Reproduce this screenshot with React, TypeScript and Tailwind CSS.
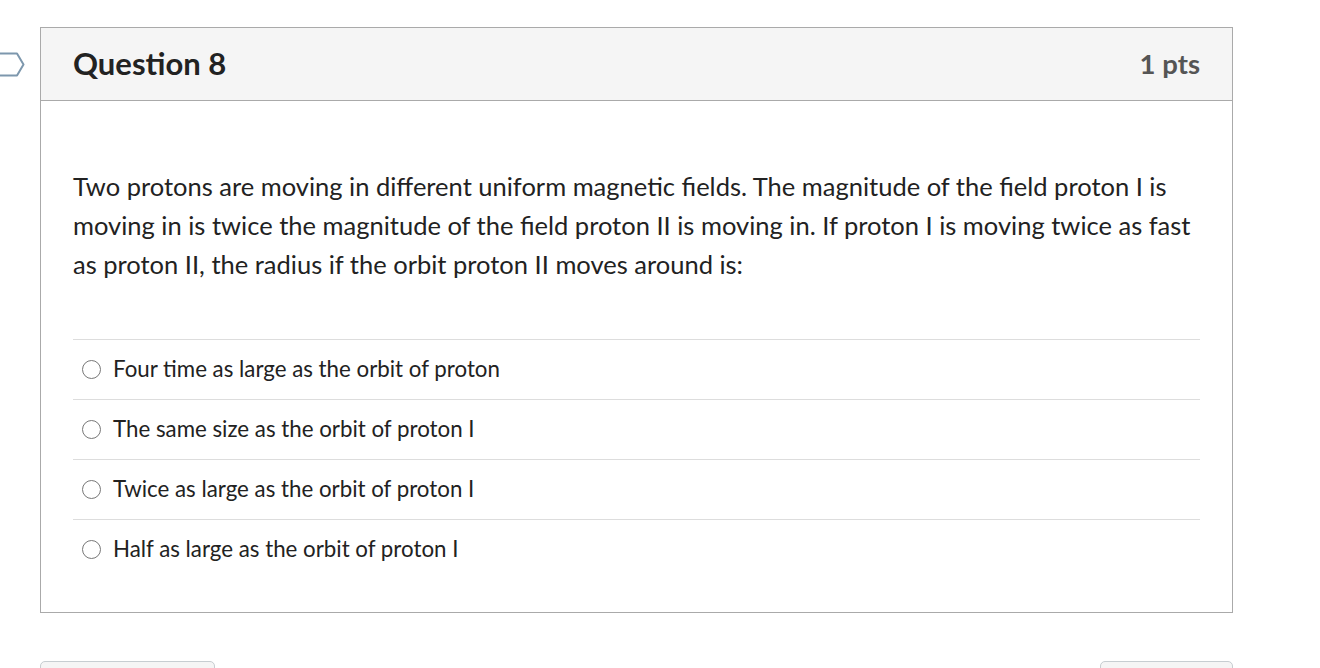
import React from 'react';

const answers = [
  'Four time as large as the orbit of proton',
  'The same size as the orbit of proton I',
  'Twice as large as the orbit of proton I',
  'Half as large as the orbit of proton I',
];

function Radio() {
  return (
    <span className="w-[19px] h-[19px] rounded-full border-[1.5px] border-[#777] bg-white shrink-0" />
  );
}

export default function App() {
  return (
    <div className="w-[1320px] h-[668px] overflow-hidden bg-white text-[#222]" style={{ fontFamily: 'Lato, "Noto Sans", sans-serif' }}>
      <div className="relative pt-[27px] pl-[40px] w-[1233px]">
        {/* flag marker */}
        <svg className="absolute left-0 top-[52px]" width="26" height="26" viewBox="0 0 26 26">
          <path d="M-2 1.5 H17 L23.5 12.5 L17 23.5 H-2" fill="none" stroke="#7d97ad" strokeWidth="2" strokeLinejoin="round" />
        </svg>

        <div className="border border-[#aaa]">
          <div className="h-[73px] bg-[#f5f5f5] border-b border-[#aaa] px-[32px] flex items-center justify-between">
            <span className="text-[31px] font-bold text-[#222] -mt-[2px]">Question 8</span>
            <span className="text-[27.5px] font-bold text-[#555]">1 pts</span>
          </div>

          <div className="px-[32px] pt-[66px] pb-[33px]">
            <p className="text-[25.5px] leading-[39px] text-[#222]">
              Two protons are moving in different uniform magnetic fields. The magnitude of the field proton I is moving in is twice the magnitude of the field proton II is moving in. If proton I is moving twice as fast as proton II, the radius if the orbit proton II moves around is:
            </p>

            <div className="mt-[55px]">
              {answers.map((a) => (
                <div key={a} className="h-[60px] border-t border-[#ddd] flex items-center gap-[12px] pl-[9px]">
                  <Radio />
                  <span className="text-[22.3px] text-[#222] -mt-[2px]">{a}</span>
                </div>
              ))}
            </div>
          </div>
        </div>

        <div className="mt-[48px] flex justify-between">
          <div className="w-[175px] h-[40px] rounded-[5px] border border-[#c7cdd1] bg-[#f5f5f5]" />
          <div className="w-[133px] h-[40px] rounded-[5px] border border-[#c7cdd1] bg-[#f5f5f5]" />
        </div>
      </div>
    </div>
  );
}
